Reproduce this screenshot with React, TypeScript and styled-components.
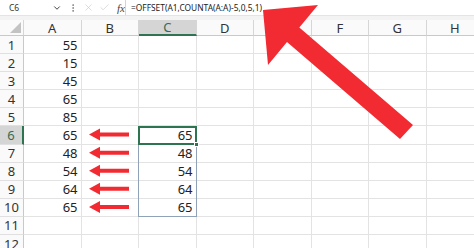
import styled, { createGlobalStyle } from 'styled-components'
import { ChevronDown, X, Check, EllipsisVertical } from 'lucide-react'

// ---- Layout constants ----
const ROW_HEAD_W = 24
const COL_W = 57.5
const HEAD_H = 16
const ROW_H = 18.1
const GRID_TOP = 20

const COLUMNS = ['A', 'B', 'C', 'D', 'E', 'F', 'G', 'H']
const COL_A = [55, 15, 45, 65, 85, 65, 48, 54, 64, 65]
const COL_C: Record<number, number> = { 6: 65, 7: 48, 8: 54, 9: 64, 10: 65 }
const ROW_COUNT = 12

const GREEN = '#2f7450'
const RED = '#f22a31'

// ---- Styled Components ----
const GlobalStyle = createGlobalStyle`
  html, body {
    margin: 0;
    padding: 0;
    background: #ffffff;
  }
  body {
    font-family: 'Noto Sans', 'Open Sans', sans-serif;
  }
`

const Screen = styled.div`
  position: relative;
  width: 474px;
  height: 248px;
  overflow: hidden;
  background: #ffffff;
`

const FormulaBar = styled.div`
  display: flex;
  align-items: stretch;
  height: 15px;
  background: #ffffff;
  border-bottom: 1px solid #e4e4e4;
`

const NameBox = styled.div`
  display: flex;
  align-items: center;
  justify-content: space-between;
  width: 64px;
  padding: 0 2px 0 9px;
  box-sizing: border-box;
  font-size: 8.5px;
  color: #333;
`

const BarTools = styled.div`
  display: flex;
  align-items: center;
  gap: 5px;
  width: 61px;
  padding-left: 4px;
  box-sizing: border-box;
`

const FxLabel = styled.span`
  font-family: 'Liberation Serif', serif;
  font-style: italic;
  font-size: 11px;
  color: #444;
  margin-left: 2px;
`

const FormulaInput = styled.div`
  flex: 1;
  display: flex;
  align-items: center;
  padding-left: 5px;
  border-left: 1px solid #d4d4d4;
  font-size: 8.4px;
  color: #222;
  white-space: nowrap;
`

const Strip = styled.div`
  height: 4px;
  background: #f3f3f3;
`

const GridWrap = styled.div`
  position: relative;
`

const Sheet = styled.div`
  display: grid;
  grid-template-columns: ${ROW_HEAD_W}px repeat(${COLUMNS.length}, ${COL_W}px);
  grid-template-rows: ${HEAD_H}px repeat(${ROW_COUNT}, ${ROW_H}px);
`

const Corner = styled.div`
  position: relative;
  background: #fafafa;
  border-right: 1px solid #d6d6d6;
  border-bottom: 1px solid #c9c9c9;
  box-sizing: border-box;

  &::after {
    content: '';
    position: absolute;
    right: 2px;
    bottom: 2px;
    border-left: 11px solid transparent;
    border-bottom: 11px solid #c3c3c3;
  }
`

const ColHead = styled.div<{ $active?: boolean }>`
  display: flex;
  align-items: center;
  justify-content: center;
  font-size: 13px;
  color: ${({ $active }) => ($active ? '#3a6a50' : '#333')};
  background: ${({ $active }) => ($active ? '#d5d5d5' : '#fafafa')};
  border-right: 1px solid #d6d6d6;
  border-bottom: ${({ $active }) => ($active ? `2px solid ${GREEN}` : '1px solid #c9c9c9')};
  box-sizing: border-box;
`

const RowHead = styled.div<{ $active?: boolean }>`
  display: flex;
  align-items: center;
  justify-content: center;
  font-size: 13px;
  color: ${({ $active }) => ($active ? '#3a6a50' : '#333')};
  background: ${({ $active }) => ($active ? '#d3d6d4' : '#fafafa')};
  border-right: ${({ $active }) => ($active ? `2px solid ${GREEN}` : '1px solid #c9c9c9')};
  border-bottom: 1px solid #e0e0e0;
  box-sizing: border-box;
`

const Cell = styled.div`
  display: flex;
  align-items: center;
  justify-content: flex-end;
  padding-right: 3px;
  font-size: 13px;
  color: #222;
  border-right: 1px solid #e3e3e3;
  border-bottom: 1px solid #e3e3e3;
  box-sizing: border-box;
`

const SpillBorder = styled.div`
  position: absolute;
  border: 1px solid #8fa2b8;
  box-sizing: border-box;
  pointer-events: none;
`

const Selection = styled.div`
  position: absolute;
  border: 2px solid ${GREEN};
  box-sizing: border-box;
  pointer-events: none;

  &::after {
    content: '';
    position: absolute;
    right: -4px;
    bottom: -4px;
    width: 5px;
    height: 5px;
    background: ${GREEN};
    border: 1px solid #fff;
    box-sizing: border-box;
  }
`

const ArrowLayer = styled.svg`
  position: absolute;
  left: 0;
  top: 0;
  width: 474px;
  height: 248px;
  pointer-events: none;
`

// ---- Component ----
const cellLeft = (col: number) => ROW_HEAD_W + COL_W * col
const rowTop = (row: number) => HEAD_H + ROW_H * (row - 1)

const SmallArrow = ({ cy }: { cy: number }) => (
  <polygon
    fill={RED}
    points={`89,${cy} 100,${cy - 6} 100,${cy - 2} 129,${cy - 2} 129,${cy + 2} 100,${cy + 2} 100,${cy + 6}`}
  />
)

export default function App() {
  const rows = Array.from({ length: ROW_COUNT }, (_, i) => i + 1)

  return (
    <Screen>
      <GlobalStyle />
      <FormulaBar>
        <NameBox>
          <span>C6</span>
          <ChevronDown size={10} strokeWidth={2.4} color="#444" />
        </NameBox>
        <BarTools>
          <EllipsisVertical size={10} color="#777" />
          <X size={11} strokeWidth={1.4} color="#c8c8c8" />
          <Check size={11} strokeWidth={1.4} color="#c8c8c8" />
          <FxLabel>fx</FxLabel>
        </BarTools>
        <FormulaInput>=OFFSET(A1,COUNTA(A:A)-5,0,5,1)</FormulaInput>
      </FormulaBar>
      <Strip />

      <GridWrap>
        <Sheet>
          <Corner />
          {COLUMNS.map((c) => (
            <ColHead key={c} $active={c === 'C'}>
              {c}
            </ColHead>
          ))}
          {rows.map((r) => [
            <RowHead key={`h${r}`} $active={r === 6}>
              {r}
            </RowHead>,
            ...COLUMNS.map((c) => (
              <Cell key={`${c}${r}`}>
                {c === 'A' ? COL_A[r - 1] : c === 'C' ? COL_C[r] : null}
              </Cell>
            )),
          ])}
        </Sheet>

        <SpillBorder
          style={{
            left: cellLeft(2) - 1,
            top: rowTop(6) - 1,
            width: COL_W + 1,
            height: ROW_H * 5 + 1,
          }}
        />
        <Selection
          style={{
            left: cellLeft(2) - 1,
            top: rowTop(6) - 1,
            width: COL_W + 1,
            height: ROW_H + 1,
          }}
        />
      </GridWrap>

      <ArrowLayer viewBox="0 0 474 248">
        {[6, 7, 8, 9, 10].map((r) => (
          <SmallArrow key={r} cy={GRID_TOP + rowTop(r) + ROW_H / 2 - 1} />
        ))}
        <polygon
          fill={RED}
          points="263,10 318,5 299.3,27.5 413,125 400,139 287,42 268,65"
        />
      </ArrowLayer>
    </Screen>
  )
}
